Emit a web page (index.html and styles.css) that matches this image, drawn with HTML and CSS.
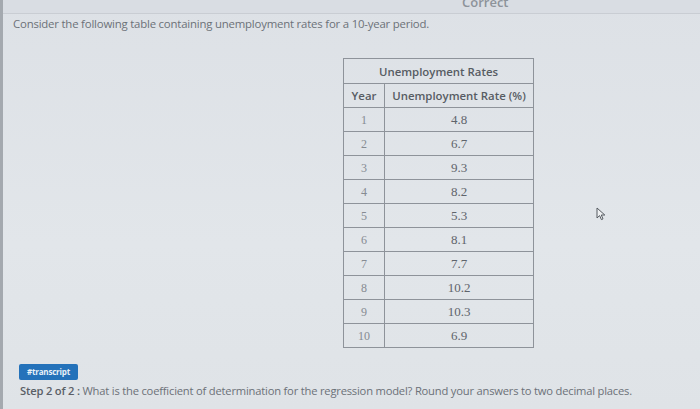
FILE: index.html
```html
<!DOCTYPE html>
<html>
<head>
<meta charset="utf-8">
<link rel="stylesheet" href="styles.css">
</head>
<body>
<div class="page">
  <div class="topbar"><span class="status">Correct</span></div>
  <p class="question">Consider the following table containing unemployment rates for a 10-year period.</p>
  <div class="table-wrap">
    <table class="data">
      <thead>
        <tr><th colspan="2" class="title">Unemployment Rates</th></tr>
        <tr><th class="year">Year</th><th class="rate">Unemployment Rate (%)</th></tr>
      </thead>
      <tbody>
        <tr><td class="y">1</td><td class="v">4.8</td></tr>
        <tr><td class="y">2</td><td class="v">6.7</td></tr>
        <tr><td class="y">3</td><td class="v">9.3</td></tr>
        <tr><td class="y">4</td><td class="v">8.2</td></tr>
        <tr><td class="y">5</td><td class="v">5.3</td></tr>
        <tr><td class="y">6</td><td class="v">8.1</td></tr>
        <tr><td class="y">7</td><td class="v">7.7</td></tr>
        <tr><td class="y">8</td><td class="v">10.2</td></tr>
        <tr><td class="y">9</td><td class="v">10.3</td></tr>
        <tr><td class="y">10</td><td class="v">6.9</td></tr>
      </tbody>
    </table>
  </div>
  <div class="footer">
    <span class="btn">#transcript</span>
    <p class="step"><b>Step 2 of 2 :</b> What is the coefficient of determination for the regression model? Round your answers to two decimal places.</p>
  </div>
  <svg class="cursor" width="10" height="14" viewBox="0 0 10 14"><path d="M1 1 L1 11 L3.6 8.6 L5.4 12.6 L7 11.9 L5.3 8 L8.8 8 Z" fill="#eef0f2" stroke="#555a60" stroke-width="1"/></svg>
</div>
</body>
</html>
```
FILE: styles.css
```css
html, body {
  margin: 0;
  padding: 0;
}
body {
  width: 700px;
  height: 409px;
  overflow: hidden;
  background: #dfe3e8;
  font-family: "Open Sans", "Liberation Sans", sans-serif;
}
.page {
  position: relative;
  height: 409px;
  border-left: 3px solid #a4a9af;
  box-sizing: border-box;
  background: linear-gradient(#dde1e6, #e2e6ea 60%, #dfe3e7);
}
.topbar {
  height: 13px;
  overflow: hidden;
  border-bottom: 1px solid #c9cdd3;
  background: #d9dde3;
}
.status {
  display: block;
  margin: -6px 0 0 459px;
  font-size: 13px;
  font-weight: 600;
  color: #8d939a;
  line-height: 16px;
}
.question {
  margin: 2px 0 0 10px;
  font-size: 11.4px;
  line-height: 15px;
  color: #6c7178;
  letter-spacing: -0.2px;
}
.table-wrap {
  padding: 27px 0 0 340px;
}
.data {
  border-collapse: collapse;
  width: 191px;
}
.data th, .data td {
  border: 1px solid #8e939a;
  padding: 0;
}
.data th {
  font-weight: 600;
  font-size: 11.4px;
  color: #575c63;
}
.data th.title {
  height: 24px;
}
.data th.year {
  height: 23px;
  width: 40px;
}
.data td {
  height: 23px;
  line-height: 14px;
  text-align: center;
  font-family: "Liberation Serif", "DejaVu Serif", serif;
  font-size: 13px;
}
.data td.y {
  color: #868b92;
  font-size: 12px;
}
.data td.v {
  color: #5f646b;
}
.footer {
  display: flex;
  flex-direction: column;
  align-items: flex-start;
  padding: 16px 0 0 16px;
}
.btn {
  display: block;
  width: 59px;
  height: 16px;
  line-height: 16px;
  text-align: center;
  background: #2472ba;
  color: #e9f1f8;
  font-size: 8px;
  font-weight: 700;
  border-radius: 2px;
  letter-spacing: -0.2px;
}
.step {
  margin: 3px 0 0 1px;
  font-size: 11.2px;
  line-height: 15px;
  color: #6c7178;
  letter-spacing: -0.2px;
}
.step b {
  font-weight: 600;
  color: #5a5f66;
}
.cursor {
  position: absolute;
  left: 593px;
  top: 207px;
}
```
